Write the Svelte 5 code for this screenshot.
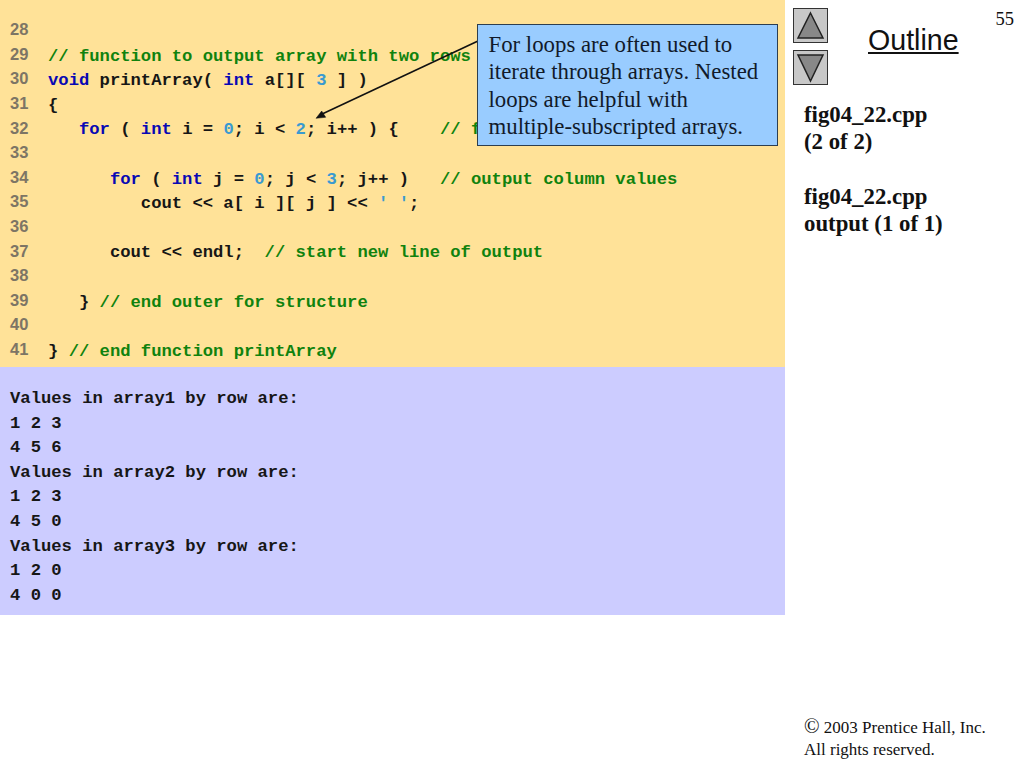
<script>
  const K = 'k', N = 'n', C = 'c', T = 't';
  const code = [
    [28, []],
    [29, [[C, '// function to output array with two rows']]],
    [30, [[K, 'void'], [T, ' printArray( '], [K, 'int'], [T, ' a[][ '], [N, '3'], [T, ' ] )']]],
    [31, [[T, '{']]],
    [32, [[T, '   '], [K, 'for'], [T, ' ( '], [K, 'int'], [T, ' i = '], [N, '0'], [T, '; i < '], [N, '2'], [T, '; i++ ) {    '], [C, '// f']]],
    [33, []],
    [34, [[T, '      '], [K, 'for'], [T, ' ( '], [K, 'int'], [T, ' j = '], [N, '0'], [T, '; j < '], [N, '3'], [T, '; j++ )   '], [C, '// output column values']]],
    [35, [[T, '         cout << a[ i ][ j ] << '], [N, "' '"], [T, ';']]],
    [36, []],
    [37, [[T, '      cout << endl;  '], [C, '// start new line of output']]],
    [38, []],
    [39, [[T, '   } '], [C, '// end outer for structure']]],
    [40, []],
    [41, [[T, '} '], [C, '// end function printArray']]]
  ];
  const output = [
    'Values in array1 by row are:', '1 2 3', '4 5 6',
    'Values in array2 by row are:', '1 2 3', '4 5 0',
    'Values in array3 by row are:', '1 2 0', '4 0 0'
  ];
</script>

<div class="page">
  <main class="main">
    <section class="code">
      {#each code as [num, parts]}
        <div class="line">
          <span class="num">{num}</span>
          <pre class="src">{#each parts as [cls, text]}<span class={cls}>{text}</span>{/each}</pre>
        </div>
      {/each}
    </section>
    <section class="output">
      {#each output as row}
        <pre class="src">{row}</pre>
      {/each}
    </section>

    <svg class="arrow" width="170" height="90" viewBox="0 0 170 90" aria-hidden="true">
      <line x1="167" y1="7" x2="9" y2="81" stroke="#111" stroke-width="1.6" />
      <polygon points="5,84.3 10.7,77 14.7,83.3" fill="#111" stroke="#111" stroke-width=".5" />
    </svg>
    <aside class="callout">For loops are often used to<br />iterate through arrays. Nested<br />loops are helpful with<br />multiple-subscripted arrays.</aside>
  </main>

  <aside class="side">
    <div class="top">
      <div class="nav">
        <svg class="btn" width="35" height="35" viewBox="0 0 35 35" aria-hidden="true">
          <rect x=".5" y=".5" width="34" height="34" fill="#c8c8c8" stroke="#333" />
          <polygon points="17.5,5 30,30 5,30" fill="#888" stroke="#222" stroke-width="1.5" />
        </svg>
        <svg class="btn" width="35" height="35" viewBox="0 0 35 35" aria-hidden="true">
          <rect x=".5" y=".5" width="34" height="34" fill="#c8c8c8" stroke="#333" />
          <polygon points="5,5 30,5 17.5,31" fill="#888" stroke="#222" stroke-width="1.5" />
        </svg>
      </div>
      <h1 class="title">Outline</h1>
      <div class="pageno">55</div>
    </div>
    <div class="files">
      <p>fig04_22.cpp<br />(2 of 2)</p>
      <p>fig04_22.cpp<br />output (1 of 1)</p>
    </div>
    <footer class="foot"><span class="copy">©</span> 2003 Prentice Hall, Inc.<br />All rights reserved.</footer>
  </aside>
</div>

<style>
  :global(body) { margin: 0; background: #fff; }
  .page { display: flex; width: 1024px; height: 768px; overflow: hidden; color: #111; }
  .main { position: relative; flex: 0 0 785px; }
  .code { background: #ffe298; height: 367px; box-sizing: border-box; padding-top: 20px; }
  .line { display: flex; height: 24.6px; align-items: center; }
  .num {
    flex: 0 0 38px; padding-left: 10px; margin-bottom: 5px;
    font: bold 16.5px "Liberation Sans", sans-serif; color: #7d7565;
  }
  .src {
    margin: 0; height: 24.6px;
    font: bold 17.2px/24.6px "Liberation Mono", monospace; color: #161616;
    white-space: pre;
  }
  .k { color: #0808b4; }
  .n { color: #3a9ad0; }
  .c { color: #10820e; }
  .output { background: #ccccff; height: 248px; box-sizing: border-box; padding: 20px 0 0 10px; }
  .arrow { position: absolute; left: 311px; top: 34px; }
  .callout {
    position: absolute; left: 477px; top: 24px; width: 301px; height: 122px;
    box-sizing: border-box; padding: 6px 0 0 10.5px;
    background: #99ccff; border: 1.5px solid #2c3e50;
    font: 22.8px/27.3px "Liberation Serif", serif; color: #111a2a;
  }
  .side { flex: 1; display: flex; flex-direction: column; padding-left: 8px; box-sizing: border-box; }
  .top { display: flex; padding-top: 8px; height: 101px; box-sizing: border-box; }
  .nav { display: flex; flex-direction: column; gap: 7px; }
  .btn { display: block; }
  .title {
    margin: 9px 0 0 40px; font: 28.6px/46px "Liberation Sans", sans-serif;
    text-decoration: underline; text-decoration-thickness: 2px; text-underline-offset: 2px;
    height: 46px;
  }
  .pageno { margin: 0 0 0 37px; font: 18.5px/22px "Liberation Serif", serif; }
  .files { padding-left: 11px; font: bold 22.8px/27.3px "Liberation Serif", serif; }
  .files p { margin: 0 0 27px; }
  .foot { margin-top: auto; padding: 0 0 7px 11px; font: 17px/22px "Liberation Serif", serif; }
  .copy { font-size: 20.5px; line-height: 0; }
</style>
